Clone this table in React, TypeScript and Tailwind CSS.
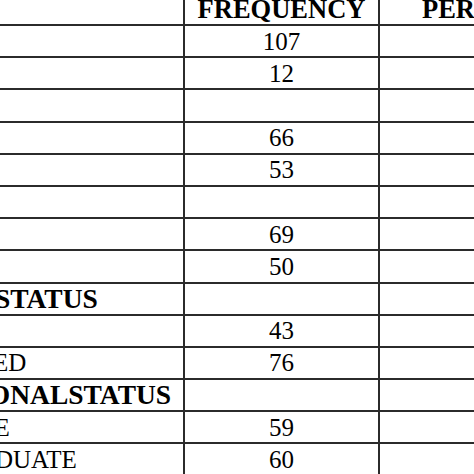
const rows: { label: string; freq: string; head?: boolean }[] = [
  { label: "MALE", freq: "107" },
  { label: "FEMALE", freq: "12" },
  { label: "AGE", freq: "", head: true },
  { label: "20-30", freq: "66" },
  { label: "31-40", freq: "53" },
  { label: "AREA", freq: "", head: true },
  { label: "URBAN", freq: "69" },
  { label: "RURAL", freq: "50" },
  { label: "MARITALSTATUS", freq: "", head: true },
  { label: "MARRIED", freq: "43" },
  { label: "UNMARRIED", freq: "76" },
  { label: "EDUCATIONALSTATUS", freq: "", head: true },
  { label: "GRADUATE", freq: "59" },
  { label: "POST-GRADUATE", freq: "60" },
];

export default function App() {
  return (
    <div className="w-[474px] h-[474px] overflow-hidden bg-white text-black" style={{ fontFamily: '"Liberation Serif", "Times New Roman", serif' }}>
      <table className="table-fixed border-collapse w-[792px] ml-[-146px] mt-[-8px] text-[25px] leading-none">
        <colgroup>
          <col className="w-[329px]" />
          <col className="w-[195px]" />
          <col className="w-[268px]" />
        </colgroup>
        <thead>
          <tr className="h-[32px]">
            <th className="border-2 border-[#2b2b2b] px-2 text-left font-bold text-[26.5px]">ITEMS</th>
            <th className="border-2 border-[#2b2b2b] px-2 text-center font-bold text-[26.5px]">FREQUENCY</th>
            <th className="border-2 border-[#2b2b2b] px-2 text-center font-bold text-[26.5px]">PERCENTAGE</th>
          </tr>
        </thead>
        <tbody>
          {rows.map((r, i) => (
            <tr key={i} className="h-[32.2px]">
              <td className={`border-2 border-[#2b2b2b] whitespace-nowrap ${r.head ? "px-2 font-bold text-[27.5px]" : "pl-[19px] pr-2 font-normal"}`}>{r.label}</td>
              <td className="border-2 border-[#2b2b2b] px-2 text-center">{r.freq}</td>
              <td className="border-2 border-[#2b2b2b] px-2 text-center"></td>
            </tr>
          ))}
        </tbody>
      </table>
    </div>
  );
}
